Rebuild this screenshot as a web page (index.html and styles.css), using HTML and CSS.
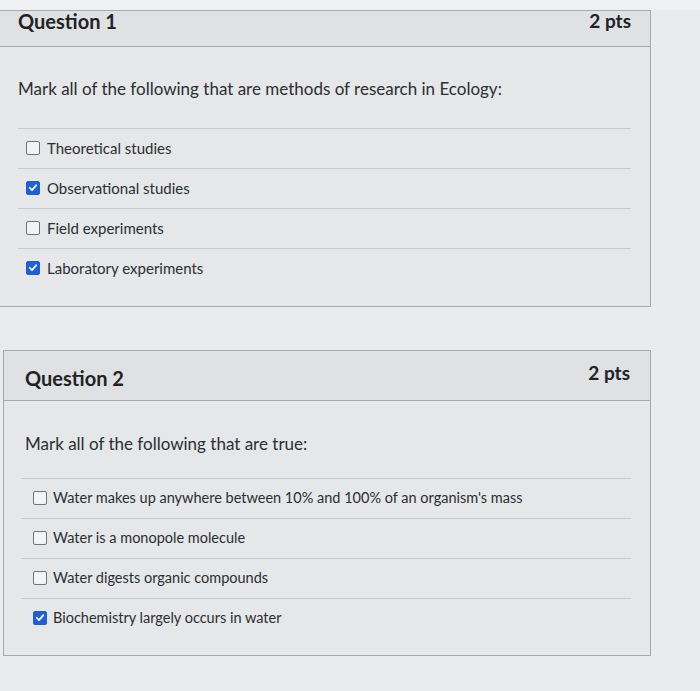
FILE: index.html
```html
<!DOCTYPE html>
<html lang="en">
<head>
<meta charset="utf-8">
<title>Quiz</title>
<link rel="stylesheet" href="styles.css">
</head>
<body>
<div class="page">
  <section class="question q1">
    <header class="q-header">
      <h2 class="q-title">Question 1</h2>
      <span class="q-pts">2 pts</span>
    </header>
    <div class="q-body">
      <p class="q-text">Mark all of the following that are methods of research in Ecology:</p>
      <ul class="answers">
        <li class="answer"><span class="box"></span><span class="label">Theoretical studies</span></li>
        <li class="answer"><span class="box checked"><svg viewBox="0 0 14 14"><path d="M3.2 7.3 L5.9 10 L10.9 4.2" /></svg></span><span class="label">Observational studies</span></li>
        <li class="answer"><span class="box"></span><span class="label">Field experiments</span></li>
        <li class="answer"><span class="box checked"><svg viewBox="0 0 14 14"><path d="M3.2 7.3 L5.9 10 L10.9 4.2" /></svg></span><span class="label">Laboratory experiments</span></li>
      </ul>
    </div>
  </section>

  <section class="question q2">
    <header class="q-header">
      <h2 class="q-title">Question 2</h2>
      <span class="q-pts">2 pts</span>
    </header>
    <div class="q-body">
      <p class="q-text">Mark all of the following that are true:</p>
      <ul class="answers">
        <li class="answer"><span class="box"></span><span class="label">Water makes up anywhere between 10% and 100% of an organism's mass</span></li>
        <li class="answer"><span class="box"></span><span class="label">Water is a monopole molecule</span></li>
        <li class="answer"><span class="box"></span><span class="label">Water digests organic compounds</span></li>
        <li class="answer"><span class="box checked"><svg viewBox="0 0 14 14"><path d="M3.2 7.3 L5.9 10 L10.9 4.2" /></svg></span><span class="label">Biochemistry largely occurs in water</span></li>
      </ul>
    </div>
  </section>
</div>
</body>
</html>
```
FILE: styles.css
```css
html, body {
  margin: 0;
  padding: 0;
}
body {
  background: #e9ebec;
  font-family: Lato, "Open Sans", "Liberation Sans", sans-serif;
  color: #2b2f33;
  width: 700px;
  height: 691px;
  overflow: hidden;
}
.page {
  padding-top: 10px;
  background: linear-gradient(#eef0f1 0, #eef0f1 10px, #e9ebec 10px);
  height: 681px;
}
.question {
  border: 1px solid #a7aaac;
  background: #e5e7e8;
  box-sizing: border-box;
}
.q1 {
  margin-left: -1px;
  width: 652px;
}
.q2 {
  margin-top: 43px;
  margin-left: 3px;
  width: 648px;
}
.q-header {
  display: flex;
  justify-content: space-between;
  align-items: flex-start;
  background: #dfe1e2;
  border-bottom: 1px solid #a7aaac;
}
.q1 .q-header {
  height: 35px;
  padding: 0 19px 0 18px;
}
.q2 .q-header {
  height: 49px;
  padding: 0 20px 0 21px;
}
.q-title {
  margin: 0;
  font-size: 20px;
  line-height: 24px;
  font-weight: 700;
  color: #202326;
}
.q-pts {
  font-size: 19px;
  line-height: 24px;
  font-weight: 700;
  color: #202326;
}
.q1 .q-title,
.q1 .q-pts {
  margin-top: -2px;
}
.q2 .q-title {
  margin-top: 15px;
}
.q2 .q-pts {
  margin-top: 10px;
}
.q1 .q-body {
  padding: 31px 19px 18px 18px;
}
.q2 .q-body {
  padding: 32px 19px 17px 17px;
}
.q-text {
  margin: 0 0 28px 0;
  font-size: 17px;
  line-height: 22px;
  color: #2b2f33;
}
.q2 .q-text {
  margin-left: 4px;
  margin-bottom: 23px;
}
.answers {
  list-style: none;
  margin: 0;
  padding: 0;
  border-top: 1px solid #c9cccd;
}
.answer {
  display: flex;
  align-items: center;
  height: 39px;
  border-bottom: 1px solid #c9cccd;
  padding-left: 8px;
}
.answer:last-child {
  border-bottom: none;
}
.q2 .answer {
  padding-left: 12px;
}
.box {
  width: 12px;
  height: 12px;
  border: 1.5px solid #6f7376;
  border-radius: 2px;
  background: #f2f3f4;
  margin-right: 7px;
  margin-top: -2px;
  flex: none;
  display: flex;
  align-items: center;
  justify-content: center;
}
.q2 .box {
  margin-right: 6px;
}
.box.checked {
  background: #1c5fd9;
  border-color: #1c5fd9;
}
.box svg {
  width: 13px;
  height: 13px;
}
.box svg path {
  fill: none;
  stroke: #ffffff;
  stroke-width: 2;
  stroke-linecap: round;
  stroke-linejoin: round;
}
.label {
  font-size: 15px;
  line-height: 20px;
  margin-top: -2px;
  color: #2b2f33;
}
.q2 .label {
  font-size: 14.5px;
}
```
